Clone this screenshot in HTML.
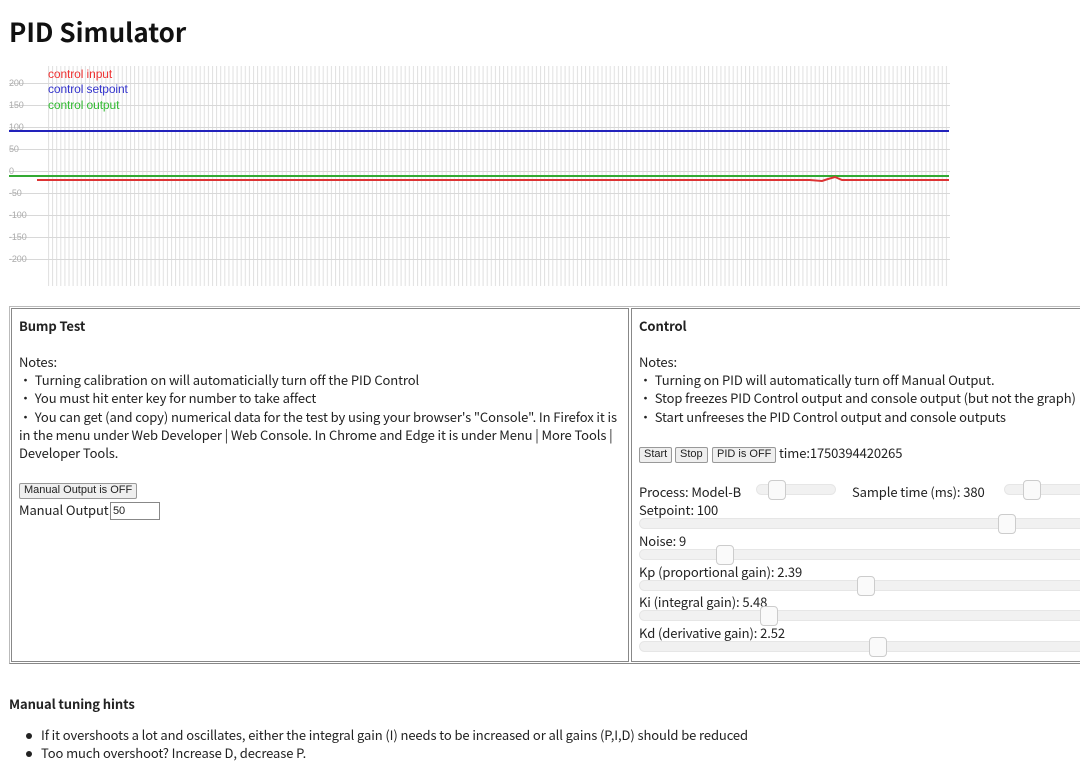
<!DOCTYPE html>
<html><head><meta charset="utf-8"><style>
*{margin:0;padding:0;box-sizing:border-box}
body{width:1080px;height:762px;overflow:hidden;background:#fff;font-family:"Noto Sans CJK JP","Liberation Sans",sans-serif;font-size:13px;letter-spacing:-0.1px;color:#222;position:relative}
.a{position:absolute;white-space:nowrap;line-height:18.5px}
.b{font-weight:bold}
.btn{position:absolute;font-family:"Liberation Sans",sans-serif;font-size:11px;letter-spacing:0;background:#efefef;border:1px solid #999;border-radius:2px;line-height:13px;padding:0 4px;color:#222}
.tr{position:absolute;height:11px;background:#f1f1f1;border:1px solid #e6e6e6;border-radius:6px}
.th{position:absolute;width:18px;height:20px;background:#fafafa;border:1px solid #ccc;border-radius:4px}
</style></head><body>
<div class="a b" style="left:9px;top:15px;font-size:26px;line-height:34px;color:#111;letter-spacing:0">PID Simulator</div>
<svg style="position:absolute;left:0;top:0" width="1080" height="300">
<defs><pattern id="v" x="48" y="0" width="4.1" height="10" patternUnits="userSpaceOnUse"><rect x="0" y="0" width="1" height="10" fill="#e0e0e0"/></pattern></defs>
<rect x="48" y="66" width="902" height="220" fill="url(#v)"/>
<g stroke="#d8d8d8" stroke-width="1">
<line x1="9" y1="83.5" x2="950" y2="83.5"/><line x1="9" y1="105.5" x2="950" y2="105.5"/><line x1="9" y1="127.5" x2="950" y2="127.5"/><line x1="9" y1="149.5" x2="950" y2="149.5"/><line x1="9" y1="171.5" x2="950" y2="171.5"/><line x1="9" y1="193.5" x2="950" y2="193.5"/><line x1="9" y1="215.5" x2="950" y2="215.5"/><line x1="9" y1="237.5" x2="950" y2="237.5"/><line x1="9" y1="259.5" x2="950" y2="259.5"/>
</g>
<g font-family="Liberation Sans,sans-serif" font-size="9" fill="#aaa">
<text x="9" y="86">200</text><text x="9" y="108">150</text><text x="9" y="130">100</text><text x="9" y="152">50</text><text x="9" y="174">0</text><text x="9" y="196">-50</text><text x="9" y="218">-100</text><text x="9" y="240">-150</text><text x="9" y="262">-200</text>
</g>
<line x1="9" y1="131" x2="949" y2="131" stroke="#2222bb" stroke-width="2"/>
<line x1="9" y1="176" x2="949" y2="176" stroke="#33aa33" stroke-width="2"/>
<polyline points="37,180 810,180 822,181 828,179 835,177 842,180 949,180" fill="none" stroke="#dd3333" stroke-width="2"/>
<g font-family="Liberation Sans,sans-serif" font-size="12">
<text x="48" y="78" fill="#ee3333">control input</text>
<text x="48" y="93" fill="#3333cc">control setpoint</text>
<text x="48" y="109" fill="#33bb33">control output</text>
</g>
</svg>
<div style="position:absolute;left:9px;top:306px;width:1080px;height:358px;border:1px solid #bbb;border-right:none;border-bottom-color:#888"></div>
<div style="position:absolute;left:11px;top:308px;width:618px;height:354px;border:1px solid #888"></div>
<div style="position:absolute;left:631px;top:308px;width:460px;height:354px;border:1px solid #888"></div>

<div class="a b" style="left:19px;top:317px">Bump Test</div>
<div class="a" style="left:19px;top:353px">Notes:</div>
<div class="a" style="left:19px;top:371px">・ Turning calibration on will automaticially turn off the PID Control</div>
<div class="a" style="left:19px;top:389px">・ You must hit enter key for number to take affect</div>
<div class="a" style="left:19px;top:408px">・ You can get (and copy) numerical data for the test by using your browser's "Console". In Firefox it is</div>
<div class="a" style="left:19px;top:426px">in the menu under Web Developer | Web Console. In Chrome and Edge it is under Menu | More Tools |</div>
<div class="a" style="left:19px;top:444px">Developer Tools.</div>
<div class="btn" style="left:19px;top:483px;height:16px">Manual Output is OFF</div>
<div class="a" style="left:19px;top:501px">Manual Output</div>
<div style="position:absolute;left:110px;top:502px;width:50px;height:18px;border:1px solid #888;font-family:Liberation Sans,sans-serif;font-size:11px;padding:2px 2px;line-height:13px">50</div>

<div class="a b" style="left:639px;top:317px">Control</div>
<div class="a" style="left:639px;top:353px">Notes:</div>
<div class="a" style="left:639px;top:371px">・ Turning on PID will automatically turn off Manual Output.</div>
<div class="a" style="left:639px;top:389px">・ Stop freezes PID Control output and console output (but not the graph)</div>
<div class="a" style="left:639px;top:408px">・ Start unfreeses the PID Control output and console outputs</div>
<div class="btn" style="left:639px;top:447px;height:16px">Start</div>
<div class="btn" style="left:675px;top:447px;height:16px">Stop</div>
<div class="btn" style="left:712px;top:447px;height:16px">PID is OFF</div>
<div class="a" style="left:779px;top:444px">time:1750394420265</div>

<div class="a" style="left:639px;top:483px">Process: Model-B</div>
<div class="tr" style="left:756px;top:484px;width:80px"></div><div class="th" style="left:768px;top:480px"></div>
<div class="a" style="left:852px;top:483px">Sample time (ms): 380</div>
<div class="tr" style="left:1004px;top:484px;width:90px"></div><div class="th" style="left:1023px;top:480px"></div>
<div class="a" style="left:639px;top:501px">Setpoint: 100</div>
<div class="tr" style="left:639px;top:518px;width:460px"></div><div class="th" style="left:998px;top:514px"></div>
<div class="a" style="left:639px;top:532px">Noise: 9</div>
<div class="tr" style="left:639px;top:549px;width:460px"></div><div class="th" style="left:716px;top:545px"></div>
<div class="a" style="left:639px;top:563px">Kp (proportional gain): 2.39</div>
<div class="tr" style="left:639px;top:580px;width:460px"></div><div class="th" style="left:857px;top:576px"></div>
<div class="a" style="left:639px;top:593px">Ki (integral gain): 5.48</div>
<div class="tr" style="left:639px;top:610px;width:460px"></div><div class="th" style="left:760px;top:606px"></div>
<div class="a" style="left:639px;top:624px">Kd (derivative gain): 2.52</div>
<div class="tr" style="left:639px;top:641px;width:460px"></div><div class="th" style="left:869px;top:637px"></div>

<div class="a b" style="left:9px;top:695px">Manual tuning hints</div>
<div style="position:absolute;left:26px;top:733px;width:6px;height:6px;border-radius:50%;background:#222"></div>
<div style="position:absolute;left:26px;top:751px;width:6px;height:6px;border-radius:50%;background:#222"></div>
<div class="a" style="left:41px;top:726px">If it overshoots a lot and oscillates, either the integral gain (I) needs to be increased or all gains (P,I,D) should be reduced</div>
<div class="a" style="left:41px;top:744px">Too much overshoot? Increase D, decrease P.</div>
</body></html>
